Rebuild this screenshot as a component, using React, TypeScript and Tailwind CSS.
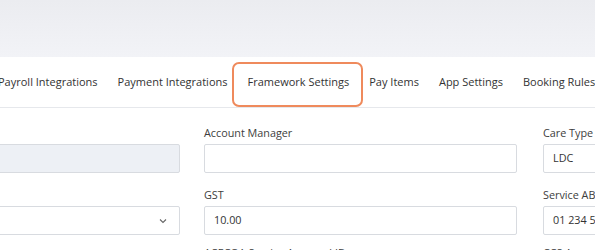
import React from "react";

const font = { fontFamily: '"Open Sans", "Noto Sans", sans-serif' };

function Tab({ label, active }: { label: string; active?: boolean }) {
  return (
    <div className="relative flex items-center px-[10px] h-full shrink-0">
      {active && (
        <div className="absolute left-[-6px] right-[-4px] top-[5px] bottom-[0px] border-2 border-[#ef8a5c] rounded-[7px]" />
      )}
      <span className="text-[11px] text-[#333] whitespace-nowrap">{label}</span>
    </div>
  );
}

function Field({
  label,
  value,
  disabled,
  select,
  className = "",
}: {
  label: string;
  value?: string;
  disabled?: boolean;
  select?: boolean;
  className?: string;
}) {
  return (
    <div className={`flex flex-col ${className}`}>
      <div className="h-[14px] leading-[14px] text-[10.8px] text-[#3d3d3d] mb-[4px] whitespace-nowrap">{label}</div>
      <div
        className={`relative h-[29px] border border-[#d8dbe0] rounded-[2px] flex items-center px-[9px] text-[10.8px] text-[#333] ${
          disabled ? "bg-[#edf0f5]" : "bg-white"
        }`}
      >
        {value}
        {select && (
          <svg
            className="absolute right-[12px] top-[11px]"
            width="8"
            height="6"
            viewBox="0 0 8 6"
            fill="none"
          >
            <path d="M1 1.5L4 4.5L7 1.5" stroke="#666" strokeWidth="1.1" />
          </svg>
        )}
      </div>
    </div>
  );
}

export default function App() {
  return (
    <div className="w-[595px] h-[250px] overflow-hidden bg-white" style={font}>
      <div className="h-[57px] bg-gradient-to-b from-[#ebecf0] to-[#f2f3f7]" />
      <div className="h-[51px] border-b border-[#e6e8ec] flex items-stretch ml-[-12px]">
        <Tab label="Payroll Integrations" />
        <Tab label="Payment Integrations" />
        <Tab label="Framework Settings" active />
        <Tab label="Pay Items" />
        <Tab label="App Settings" />
        <Tab label="Booking Rules" />
      </div>
      <div className="pt-[18px] ml-[-133px] flex gap-[24px]">
        <div className="w-[313px] flex flex-col gap-[15px] shrink-0">
          <Field label="Service Name" disabled />
          <Field label="State" select />
          <Field label="Provider Approval ID" className="mt-[-4px]" />
        </div>
        <div className="w-[313px] flex flex-col gap-[15px] shrink-0">
          <Field label="Account Manager" />
          <Field label="GST" value="10.00" />
          <Field label="ACECQA Service Approval ID" className="mt-[-4px]" />
        </div>
        <div className="w-[313px] flex flex-col gap-[15px] shrink-0 ml-[2px]">
          <Field label="Care Type" value="LDC" />
          <Field label="Service ABN" value="01 234 567 890" />
          <Field label="CCS Approval ID" className="mt-[-4px]" />
        </div>
      </div>
    </div>
  );
}
